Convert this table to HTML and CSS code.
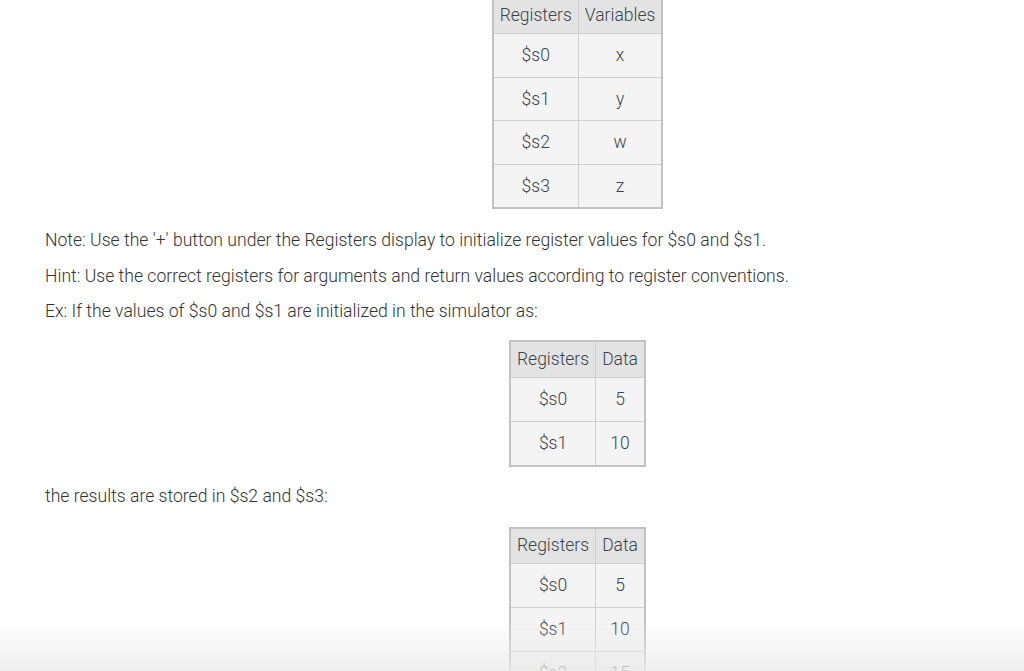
FILE: index.html
```html
<!DOCTYPE html>
<html>
<head>
<meta charset="utf-8">
<link rel="stylesheet" href="styles.css">
</head>
<body>
<div class="page">
  <div class="table-wrap first">
    <table class="reg">
      <tr><th>Registers</th><th>Variables</th></tr>
      <tr><td>$s0</td><td>x</td></tr>
      <tr><td>$s1</td><td>y</td></tr>
      <tr><td>$s2</td><td>w</td></tr>
      <tr><td>$s3</td><td>z</td></tr>
    </table>
  </div>
  <p class="txt note">Note: Use the '+' button under the Registers display to initialize register values for $s0 and $s1.</p>
  <p class="txt">Hint: Use the correct registers for arguments and return values according to register conventions.</p>
  <p class="txt">Ex: If the values of $s0 and $s1 are initialized in the simulator as:</p>
  <div class="table-wrap second">
    <table class="reg tall">
      <tr><th>Registers</th><th>Data</th></tr>
      <tr><td>$s0</td><td>5</td></tr>
      <tr><td>$s1</td><td>10</td></tr>
    </table>
  </div>
  <p class="txt results">the results are stored in $s2 and $s3:</p>
  <div class="table-wrap third">
    <table class="reg tall">
      <tr><th>Registers</th><th>Data</th></tr>
      <tr><td>$s0</td><td>5</td></tr>
      <tr><td>$s1</td><td>10</td></tr>
      <tr><td>$s2</td><td>15</td></tr>
      <tr><td>$s3</td><td>50</td></tr>
    </table>
  </div>
</div>
<div class="fade"></div>
</body>
</html>
```
FILE: styles.css
```css
html, body {
  margin: 0;
  padding: 0;
  background: #ffffff;
  overflow: hidden;
  height: 671px;
}
body {
  font-family: Roboto, "Liberation Sans", sans-serif;
  font-weight: 300;
  color: #333333;
}
.page {
  padding-left: 45px;
  display: flex;
  flex-direction: column;
}
.table-wrap {
  display: flex;
  justify-content: center;
  padding-left: 86px;
}
.first { margin-top: -3px; }
.second { margin-top: 19px; }
.third { margin-top: 21px; }
.reg {
  border-collapse: collapse;
  border: 2px solid #c2c2c2;
  font-size: 17.5px;
  color: #3c434c;
}
.reg th, .reg td {
  border: 1px solid #cfcfcf;
  text-align: center;
  font-weight: 300;
  line-height: 21px;
}
.reg th {
  background: #e3e3e3;
  padding: 6px 6px 7px;
}
.reg td {
  background: #f4f4f4;
  padding: 11px 6px 10.5px;
}
.reg.tall th {
  padding: 6.5px 6px 7px;
}
.reg.tall td {
  padding: 11px 6px 11px;
}
.txt {
  margin: 0;
  font-size: 17.6px;
  line-height: 20px;
}
.note { margin-top: 21px; }
.txt + .txt { margin-top: 15.5px; }
.results { margin-top: 19px; }
.fade {
  position: fixed;
  left: 0;
  right: 0;
  bottom: 0;
  height: 50px;
  background: linear-gradient(to bottom, rgba(255,255,255,0), rgba(234,234,234,0.8));
  pointer-events: none;
}
```
